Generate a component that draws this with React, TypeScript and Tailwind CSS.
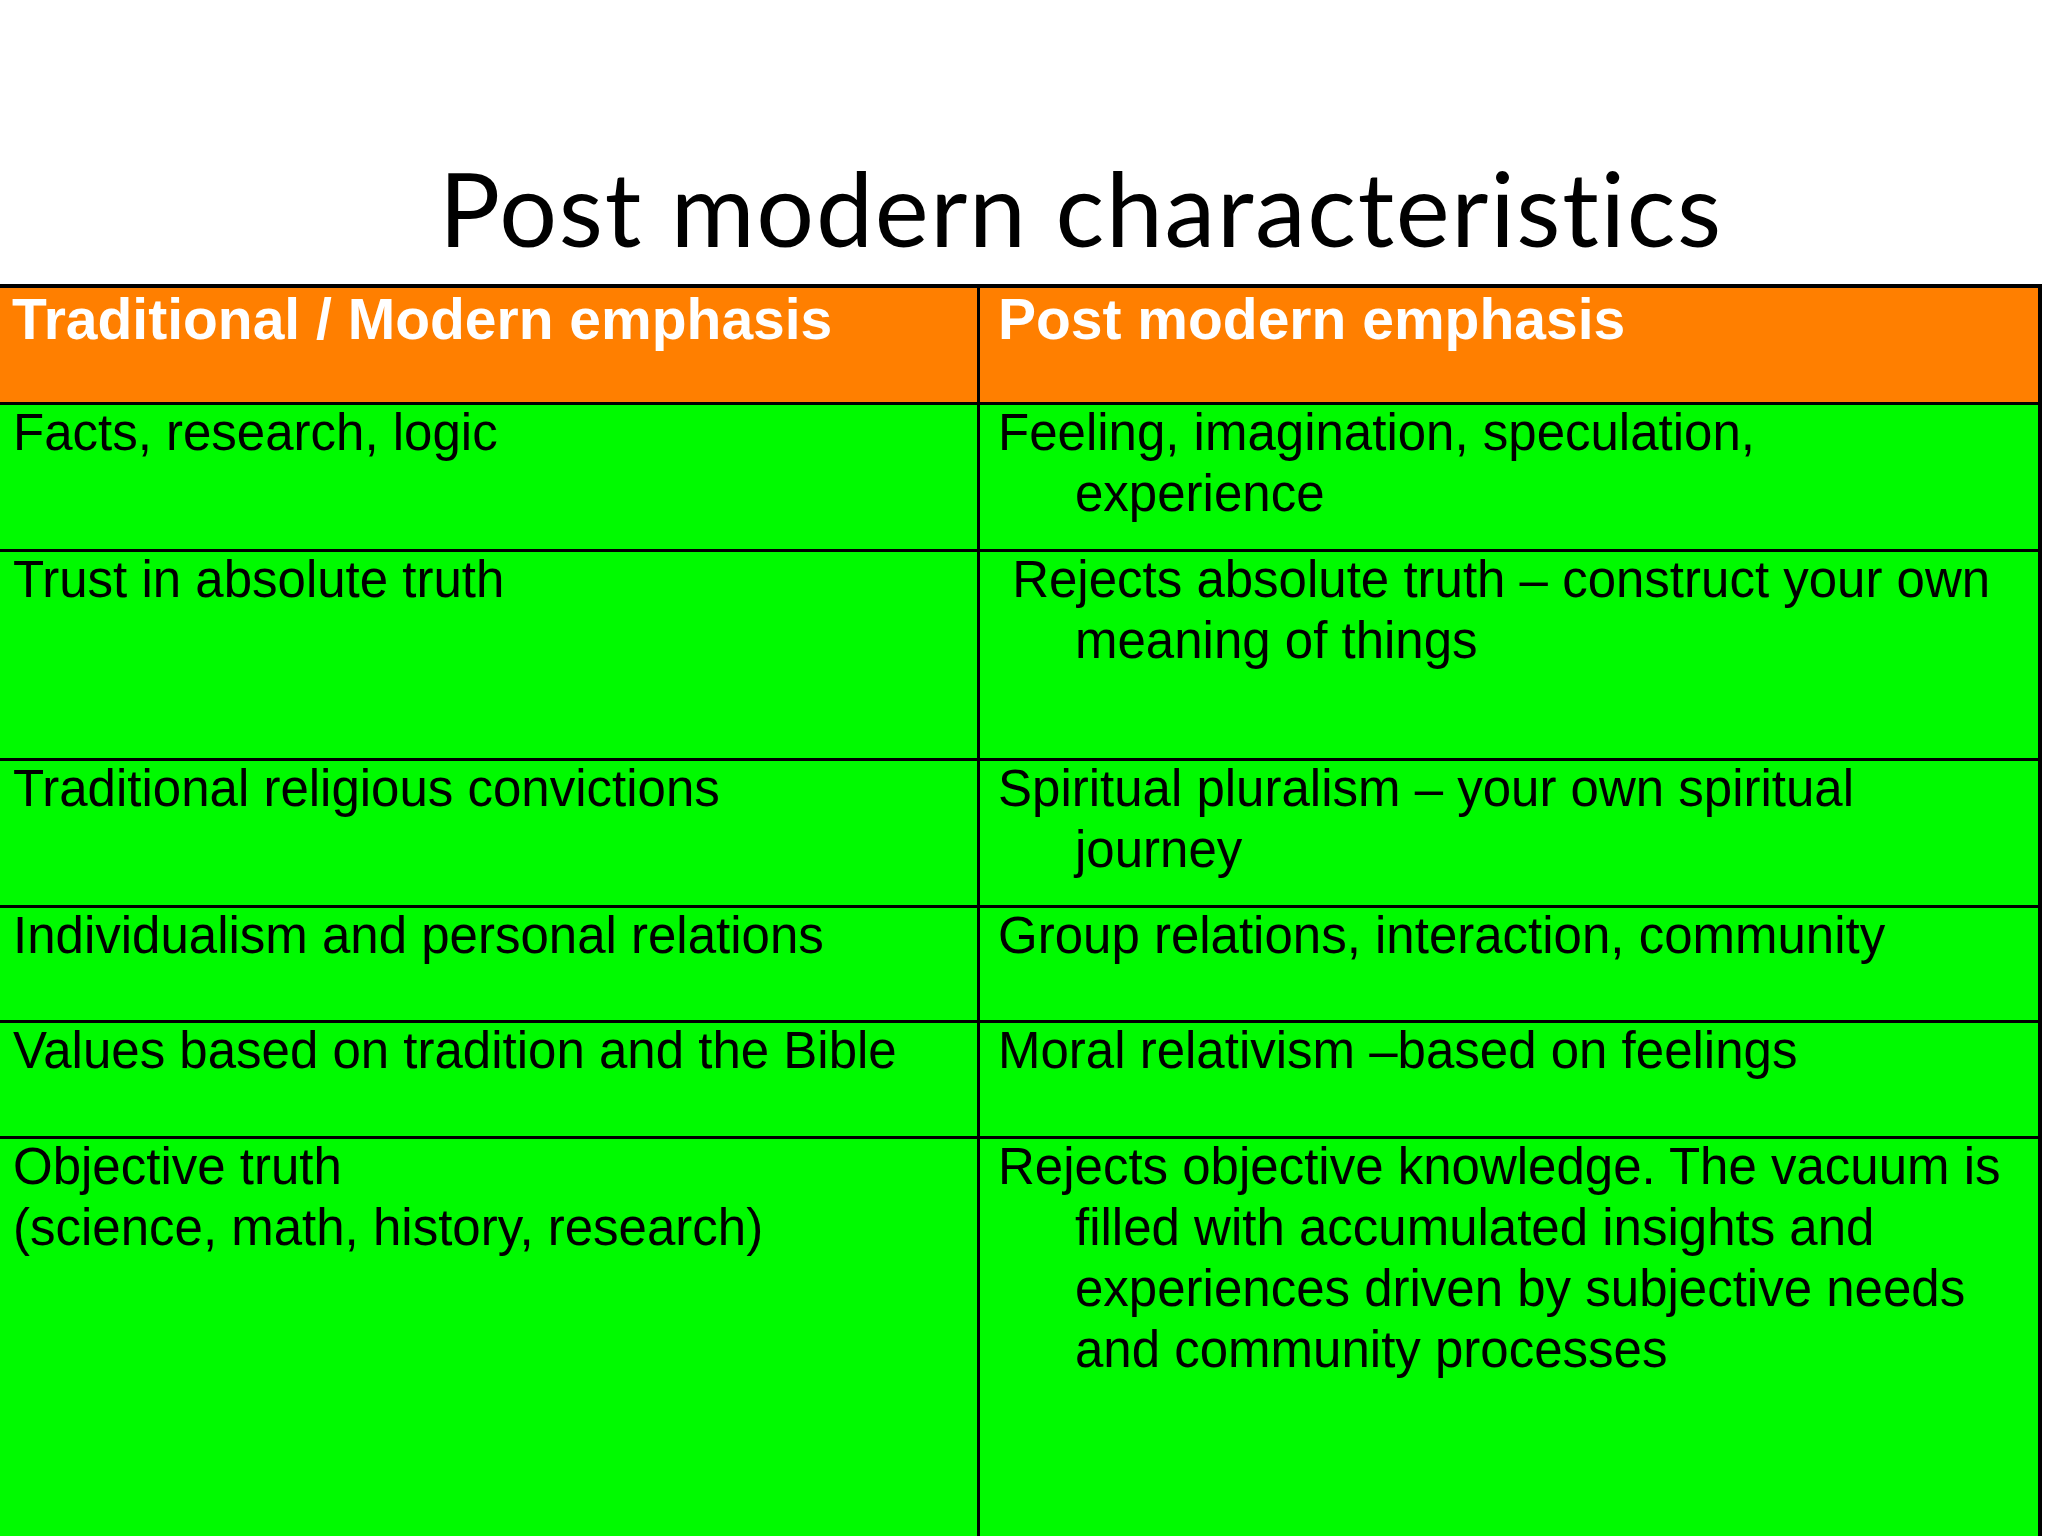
type Row = {
  left: string[];
  right: string[];
  h: string;
};

const rows: Row[] = [
  {
    left: ['Facts, research, logic'],
    right: ['Feeling, imagination, speculation,', 'experience'],
    h: 'h-[147px]',
  },
  {
    left: ['Trust in absolute truth'],
    right: ['\u00a0Rejects absolute truth \u2013 construct your own', 'meaning of things'],
    h: 'h-[209px]',
  },
  {
    left: ['Traditional religious convictions'],
    right: ['Spiritual pluralism \u2013 your own spiritual', 'journey'],
    h: 'h-[147px]',
  },
  {
    left: ['Individualism and personal relations'],
    right: ['Group relations, interaction, community'],
    h: 'h-[115px]',
  },
  {
    left: ['Values based on tradition and the Bible'],
    right: ['Moral relativism \u2013based on feelings'],
    h: 'h-[116px]',
  },
  {
    left: ['Objective truth', '(science, math, history, research)'],
    right: [
      'Rejects objective knowledge. The vacuum is',
      'filled with accumulated insights and',
      'experiences driven by subjective needs',
      'and community processes',
    ],
    h: 'h-[420px]',
  },
];

function Lines({ lines }: { lines: string[] }) {
  return (
    <>
      {lines.map((l, i) => (
        <span key={i}>
          {i > 0 && <br />}
          {l}
        </span>
      ))}
    </>
  );
}

export default function App() {
  return (
    <div className="w-[2048px] h-[1536px] overflow-hidden bg-white">
      <div className="h-[284px] pt-[157px] pl-[114px] text-center">
        <h1 className="font-['Lato','Open_Sans',sans-serif] text-[102px] leading-none tracking-[1.7px] font-normal text-black">
          Post modern characteristics
        </h1>
      </div>

      <div className="w-[2042px] border-t-4 border-r-4 border-black font-['Liberation_Sans',Arial,sans-serif] text-black">
        {/* header */}
        <div className="grid grid-cols-[980px_1fr] h-[117px] bg-[#ff7f00] border-b-[3px] border-black">
          <div className="border-r-[3px] border-black pl-[12px] pt-[1px] text-[57px] leading-[61px] font-bold text-white whitespace-nowrap">
            Traditional / Modern emphasis
          </div>
          <div className="pl-[18px] pt-[1px] text-[57px] leading-[61px] font-bold text-white whitespace-nowrap">
            Post modern emphasis
          </div>
        </div>

        {rows.map((r, i) => (
          <div
            key={i}
            className={`grid grid-cols-[980px_1fr] bg-[#00fa00] border-b-[3px] border-black ${r.h}`}
          >
            <div className="border-r-[3px] border-black pl-[13px]">
              <div className="-mt-[3px] text-[51px] leading-[61px] whitespace-nowrap">
                <Lines lines={r.left} />
              </div>
            </div>
            <div className="pl-[95px]">
              <div className="-mt-[3px] -indent-[77px] text-[51px] leading-[61px] whitespace-nowrap">
                <Lines lines={r.right} />
              </div>
            </div>
          </div>
        ))}
      </div>
    </div>
  );
}
